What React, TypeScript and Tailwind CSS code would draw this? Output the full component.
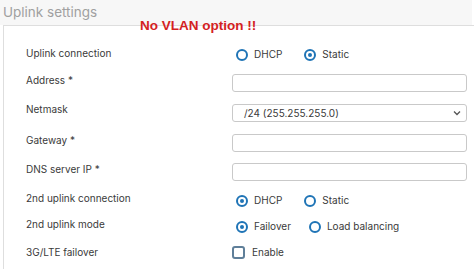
import type { ReactNode } from "react";

const FONT = { fontFamily: "Inter, 'Noto Sans', sans-serif" };

function Radio({ checked, label }: { checked?: boolean; label: string }) {
  return (
    <span className="inline-flex items-center gap-[6px]">
      <span className="flex h-[12px] w-[12px] items-center justify-center rounded-full border-2 border-[#1f74b6]">
        {checked && <span className="h-[4px] w-[4px] rounded-full bg-[#1f74b6]" />}
      </span>
      <span className="text-[10px] leading-[13px] text-[#3a3a3a]">{label}</span>
    </span>
  );
}

function Row({
  label,
  h,
  ctrlTop,
  children,
}: {
  label: string;
  h: number;
  ctrlTop: number;
  children: ReactNode;
}) {
  return (
    <div className="flex items-start" style={{ height: h }}>
      <div className="w-[206px] shrink-0 text-[10px] leading-[14px] text-[#3a3a3a]">{label}</div>
      <div className="w-[235px]" style={{ marginTop: ctrlTop }}>
        {children}
      </div>
    </div>
  );
}

function TextInput() {
  return <div className="h-[18px] w-full rounded-[3px] border border-[#c9c9c9] bg-white" />;
}

export default function App() {
  return (
    <div className="relative h-[269px] w-[474px] overflow-hidden bg-white" style={FONT}>
      {/* header strip */}
      <div className="h-[25px] w-[472px] bg-[#f7f7f7] pl-[3px] pt-[4px]">
        <div className="text-[13.5px] leading-[17px] text-[#a0a0a0]">Uplink settings</div>
      </div>

      {/* form card */}
      <div className="ml-[3px] border-l border-t border-[#dedede] bg-white pl-[22px] pt-[20px]">
        <Row label="Uplink connection" h={27} ctrlTop={2}>
          <div className="flex items-center gap-[22px] pl-[4px]">
            <Radio label="DHCP" />
            <Radio checked label="Static" />
          </div>
        </Row>
        <Row label="Address *" h={29} ctrlTop={1}>
          <TextInput />
        </Row>
        <Row label="Netmask" h={31} ctrlTop={2}>
          <div className="flex h-[18px] w-full items-center justify-between rounded-[3px] border border-[#c9c9c9] bg-white pl-[11px] pr-[5px]">
            <span className="text-[10px] leading-[13px] text-[#3a3a3a]">/24 (255.255.255.0)</span>
            <svg width="8" height="6" viewBox="0 0 8 6" fill="none">
              <path d="M1 1.5 L4 4.5 L7 1.5" stroke="#555" strokeWidth="1.3" />
            </svg>
          </div>
        </Row>
        <Row label="Gateway *" h={29} ctrlTop={1}>
          <TextInput />
        </Row>
        <Row label="DNS server IP *" h={29} ctrlTop={1}>
          <TextInput />
        </Row>
        <Row label="2nd uplink connection" h={26} ctrlTop={3}>
          <div className="flex items-center gap-[22px] pl-[4px]">
            <Radio checked label="DHCP" />
            <Radio label="Static" />
          </div>
        </Row>
        <Row label="2nd uplink mode" h={28} ctrlTop={3}>
          <div className="flex items-center gap-[18px] pl-[4px]">
            <Radio checked label="Failover" />
            <Radio label="Load balancing" />
          </div>
        </Row>
        <Row label="3G/LTE failover" h={24} ctrlTop={1}>
          <div className="flex items-center gap-[7px]">
            <span className="h-[13px] w-[13px] rounded-[3px] border-2 border-[#5f7f99] bg-white" />
            <span className="text-[10px] leading-[13px] text-[#3a3a3a]">Enable</span>
          </div>
        </Row>
      </div>

      {/* annotation over the screenshot */}
      <div
        className="absolute left-[140px] top-[18px] text-[13.5px] font-bold leading-[16px] text-[#d4211f]"
        style={{ fontFamily: "'Liberation Sans', Arial, sans-serif" }}
      >
        No VLAN option !!
      </div>
    </div>
  );
}
